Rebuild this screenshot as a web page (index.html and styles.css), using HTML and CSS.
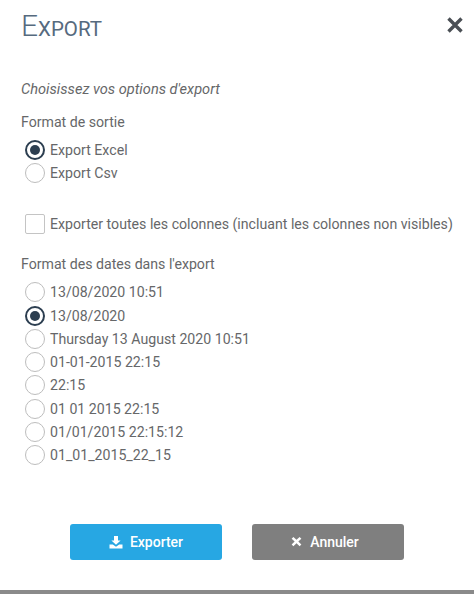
FILE: index.html
```html
<!DOCTYPE html>
<html lang="en">
<head>
  <meta charset="UTF-8" />
  <title>Export</title>
  <link rel="stylesheet" href="styles.css">
</head>
<body>
  <div class="dialog">
    <header class="dialog-head">
      <h1>Export</h1>
      <svg class="close" viewBox="0 0 18 18" width="18" height="18"><path d="M2.5 2.5 L15.5 15.5 M15.5 2.5 L2.5 15.5" /></svg>
    </header>

    <p class="hint">Choisissez vos options d'export</p>

    <div class="label">Format de sortie</div>
    <div class="options">
      <div class="option"><span class="radio checked"></span>Export Excel</div>
      <div class="option"><span class="radio"></span>Export Csv</div>
    </div>

    <div class="check-row"><span class="checkbox"></span>Exporter toutes les colonnes (incluant les colonnes non visibles)</div>

    <div class="label">Format des dates dans l'export</div>
    <div class="options">
      <div class="option"><span class="radio"></span>13/08/2020 10:51</div>
      <div class="option"><span class="radio checked"></span>13/08/2020</div>
      <div class="option"><span class="radio"></span>Thursday 13 August 2020 10:51</div>
      <div class="option"><span class="radio"></span>01-01-2015 22:15</div>
      <div class="option"><span class="radio"></span>22:15</div>
      <div class="option"><span class="radio"></span>01 01 2015 22:15</div>
      <div class="option"><span class="radio"></span>01/01/2015 22:15:12</div>
      <div class="option"><span class="radio"></span>01_01_2015_22_15</div>
    </div>

    <div class="actions">
      <button class="btn btn-export">
        <svg viewBox="0 0 14 14" width="14" height="14"><path d="M5 1h4v4.500h2.600L7 9.800 2.400 5.500H5z" /><path d="M0.500 9.500h3.300L7 11.700l3.200-2.200h3.300V13.500H0.500z" /></svg>
        Exporter
      </button>
      <button class="btn btn-cancel">
        <svg viewBox="0 0 12 12" width="11" height="11"><path d="M2.600 1 6 4.200 9.400 1 11.300 2.900 8 6 11.300 9.300 9.400 11.200 6 8 2.600 11.200 0.700 9.300 4 6 0.700 2.900z" /></svg>
        Annuler
      </button>
    </div>
  </div>
  <div class="bottom-edge"></div>
</body>
</html>
```

FILE: styles.css
```css
html, body {
  height: 100%;
}
body {
  margin: 0;
  background-color: #fff;
  font-family: Roboto, "Liberation Sans", sans-serif;
  font-size: 14.15px;
  color: #666769;
  display: flex;
  flex-direction: column;
  overflow: hidden;
}
.dialog {
  flex: 1;
  padding: 0 0 0 21px;
}
.dialog-head {
  display: flex;
  justify-content: space-between;
  align-items: center;
  height: 50px;
  padding-right: 10px;
}
.dialog-head h1 {
  margin: 0;
  font-size: 20.5px;
  font-weight: 400;
  text-transform: uppercase;
  color: #566a7e;
}
.dialog-head h1::first-letter {
  font-size: 30px;
  font-weight: 300;
}
.close {
  fill: none;
  stroke: #4a4f55;
  stroke-width: 3.4;
}
.hint {
  margin: 31px 0 0;
  font-size: 14.6px;
  font-style: italic;
  line-height: 16px;
  height: 16px;
}
.label {
  margin-top: 17px;
  line-height: 16px;
}
.options {
  margin-top: 8px;
}
.check-row + .label + .options {
  margin-top: 9px;
}
.option {
  display: flex;
  align-items: center;
  height: 23.3px;
  white-space: nowrap;
}
.radio {
  width: 18px;
  height: 18px;
  margin: 0 5px 0 4px;
  border: 1px solid #bdbdbd;
  border-radius: 50%;
  background-color: #fff;
  flex: none;
  position: relative;
}
.radio.checked {
  border: 2px solid #2c3e50;
  width: 16px;
  height: 16px;
}
.radio.checked::after {
  content: "";
  position: absolute;
  top: 3px;
  left: 3px;
  width: 10px;
  height: 10px;
  border-radius: 50%;
  background-color: #2c3e50;
}
.check-row {
  display: flex;
  align-items: center;
  margin-top: 28px;
  height: 22px;
  white-space: nowrap;
}
.checkbox {
  width: 18px;
  height: 18px;
  margin: 0 5px 0 4px;
  border: 1px solid #c4c4c4;
  border-radius: 2px;
  flex: none;
}
.check-row + .label {
  margin-top: 21px;
}
.actions {
  display: flex;
  gap: 30px;
  margin: 57px 0 0 49px;
}
.btn {
  display: flex;
  align-items: center;
  justify-content: center;
  gap: 7px;
  width: 152px;
  height: 36px;
  border: none;
  border-radius: 3px;
  color: #fff;
  font-family: inherit;
  font-size: 14px;
  font-weight: 500;
}
.btn svg {
  fill: #fff;
}
.btn-export {
  background-color: #27a7e3;
}
.btn-cancel {
  gap: 8px;
  padding-right: 12px;
  background-color: #7f7f7f;
}
.bottom-edge {
  height: 4px;
  background-color: #8a8a8a;
  flex: none;
}
```
